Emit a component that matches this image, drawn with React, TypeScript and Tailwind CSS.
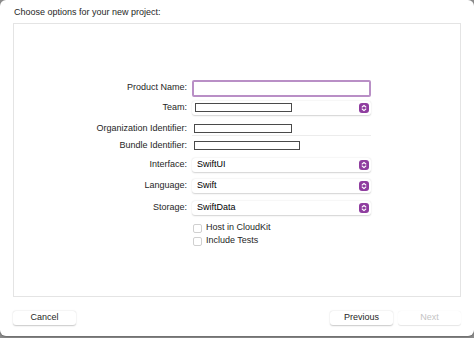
import React from "react";

function Stepper() {
  return (
    <div className="flex h-[10px] w-[10px] items-center justify-center rounded-[3px] bg-[#8f3d9f]">
      <svg width="6" height="8" viewBox="0 0 6 8" fill="none" stroke="#fff" strokeWidth="1.1" strokeLinecap="round" strokeLinejoin="round">
        <path d="M1.2 3 L3 1.3 L4.8 3" />
        <path d="M1.2 5 L3 6.7 L4.8 5" />
      </svg>
    </div>
  );
}

function Popup({ children }: { children?: React.ReactNode }) {
  return (
    <div className="flex h-[14px] w-[179px] items-center justify-between rounded-[3px] bg-white pl-[5px] pr-[2px] shadow-[0_0.5px_1.5px_rgba(0,0,0,0.18)]">
      <div className="flex items-center">{children}</div>
      <Stepper />
    </div>
  );
}

function Box({ w }: { w: string }) {
  return <div className={`h-[9px] ${w} border border-[#4a4a4a] bg-white`} />;
}

function Row({ label, mt, h, children }: { label: string; mt: string; h: string; children: React.ReactNode }) {
  return (
    <div className={`flex items-center ${mt} ${h}`}>
      <div className="w-[173px] text-right text-[#262626]">{label}</div>
      <div className="ml-[5px] flex items-center">{children}</div>
    </div>
  );
}

export default function App() {
  return (
    <div className="h-[338px] w-[474px] bg-[#8c8c8c] text-[9px]" style={{ fontFamily: '"Liberation Sans", Arial, sans-serif' }}>
      <div className="flex h-[336px] w-[474px] flex-col rounded-[6px] bg-white shadow-[0_1px_2px_rgba(0,0,0,0.25)]">
        <div className="mt-[6px] ml-[14px] text-[#262626]">Choose options for your new project:</div>
        <div className="mx-[13px] mt-[3px] h-[274px] border border-[#e4e4e4] bg-white pt-[56px]">
          <Row label="Product Name:" mt="mt-0" h="h-[17px]">
            <div className="h-[17px] w-[179px] rounded-[2px] border-2 border-[#b98fc6] bg-white" />
          </Row>
          <Row label="Team:" mt="mt-[4px]" h="h-[14px]">
            <Popup>
              <div className="-ml-[2px]">
                <Box w="w-[97px]" />
              </div>
            </Popup>
          </Row>
          <Row label="Organization Identifier:" mt="mt-[7px]" h="h-[14px]">
            <div className="flex h-[14px] w-[179px] items-center border-b border-[#ececec] bg-white pl-[2px]">
              <Box w="w-[98px]" />
            </div>
          </Row>
          <Row label="Bundle Identifier:" mt="mt-[3px]" h="h-[14px]">
            <div className="pl-[2px]">
              <Box w="w-[106px]" />
            </div>
          </Row>
          <Row label="Interface:" mt="mt-[5px]" h="h-[14px]">
            <Popup>SwiftUI</Popup>
          </Row>
          <Row label="Language:" mt="mt-[7px]" h="h-[14px]">
            <Popup>Swift</Popup>
          </Row>
          <Row label="Storage:" mt="mt-[8px]" h="h-[14px]">
            <Popup>SwiftData</Popup>
          </Row>
          <div className="ml-[179px] mt-[9px] flex flex-col gap-[4px] text-[#262626]">
            <label className="flex h-[9px] items-center gap-[4px]">
              <span className="h-[9px] w-[9px] rounded-[2px] border border-[#d0d0d0] bg-white" />
              Host in CloudKit
            </label>
            <label className="flex h-[9px] items-center gap-[4px]">
              <span className="h-[9px] w-[9px] rounded-[2px] border border-[#d0d0d0] bg-white" />
              Include Tests
            </label>
          </div>
        </div>
        <div className="mx-[13px] mt-[14px] flex items-center justify-between">
          <button className="h-[14px] w-[63px] rounded-[3px] bg-white text-[#262626] shadow-[0_0.5px_1.5px_rgba(0,0,0,0.22)]">Cancel</button>
          <div className="flex gap-[5px]">
            <button className="h-[14px] w-[63px] rounded-[3px] bg-white text-[#262626] shadow-[0_0.5px_1.5px_rgba(0,0,0,0.22)]">Previous</button>
            <button className="h-[14px] w-[63px] rounded-[3px] bg-white text-[#c4c4c4] shadow-[0_0.5px_1px_rgba(0,0,0,0.1)]">Next</button>
          </div>
        </div>
      </div>
    </div>
  );
}
